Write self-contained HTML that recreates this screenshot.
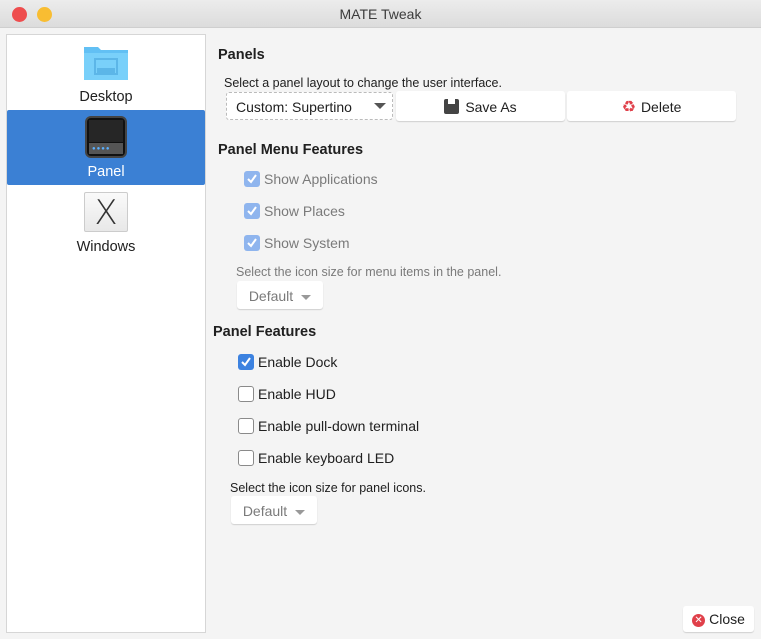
<!DOCTYPE html>
<html><head><style>
*{margin:0;padding:0;box-sizing:border-box}
body{width:761px;height:639px;background:#f4f4f4;font-family:"Liberation Sans","DejaVu Sans",sans-serif;font-size:14px;color:#202020;position:relative;overflow:hidden}
.a{position:absolute;white-space:nowrap}
.tb{left:0;top:0;width:761px;height:28px;background:linear-gradient(#ececec,#dcdcdc);border-bottom:1px solid #cfcfcf;text-align:center;line-height:28px;font-size:14px;color:#3c3c3c}
.dot{width:15px;height:15px;border-radius:50%;top:7px}
.side{left:6px;top:34px;width:200px;height:599px;background:#fff;border:1px solid #d6d6d6}
.h{font-weight:bold;font-size:14.5px}
.btn{background:#fff;border-radius:3px;box-shadow:0 1px 1px rgba(0,0,0,.15);height:30px;line-height:30px;text-align:center}
.cb{width:16px;height:16px;border-radius:3px}
.cb.on{background:#3c82e0}
.cb.dis{background:#8fb5ee}
.cb.off{border:1px solid #8a8a8a;background:#fff}
.cb svg{position:absolute;left:2px;top:2px}
.g{color:#7a7a7a}
.s{font-size:12.5px}
.tri{display:inline-block;border-left:5px solid transparent;border-right:5px solid transparent;border-top:5px solid #999;vertical-align:middle;margin-left:8px}
.m{top:1px}
</style></head><body>
<div class="a tb">MATE Tweak</div>
<div class="a dot" style="left:12px;background:#ee4d4e"></div>
<div class="a dot" style="left:37px;background:#f8bd32"></div>

<div class="a side"></div>
<div class="a" style="left:83px;top:44px;width:46px;height:36px">
<svg width="46" height="36"><path d="M1 3h14l3 3h27v29H1z" fill="#62c0f4"/><rect x="1" y="9" width="44" height="27" fill="#79d0fa"/><rect x="12" y="15" width="22" height="15" fill="none" stroke="#5cb6e8" stroke-width="2"/><rect x="14" y="24" width="18" height="5" fill="#5cb6e8"/></svg></div>
<div class="a" style="left:6px;top:89px;width:200px;text-align:center;font-size:14.5px">Desktop</div>
<div class="a" style="left:7px;top:110px;width:198px;height:75px;background:#3b80d4;border-radius:2px"></div>
<div class="a" style="left:85px;top:116px;width:42px;height:42px;background:#111;border-radius:6px;border:2px solid #444"></div>
<div class="a" style="left:89px;top:120px;width:34px;height:22px;background:#262626"></div>
<div class="a" style="left:89px;top:143px;width:34px;height:11px;background:#555"></div>
<div class="a" style="left:92px;top:146px;font-size:6px;color:#5ab0ff;letter-spacing:1px">●●●●</div>
<div class="a" style="left:6px;top:164px;width:200px;text-align:center;font-size:14.5px;color:#fff">Panel</div>
<div class="a" style="left:84px;top:192px;width:44px;height:40px;background:linear-gradient(#fafafa,#e8e8e8);border:1px solid #ccc;border-radius:2px;text-align:center;font-family:'DejaVu Sans',sans-serif;font-weight:300;font-size:34px;line-height:40px;color:#333">X</div>
<div class="a" style="left:6px;top:239px;width:200px;text-align:center;font-size:14.5px">Windows</div>

<div class="a h" style="left:218px;top:47px">Panels</div>
<div class="a s" style="left:224px;top:76px">Select a panel layout to change the user interface.</div>
<div class="a" style="left:226px;top:92px;width:167px;height:28px;background:#fff;border:1px dashed #bbb;border-radius:3px;line-height:28px;padding-left:9px">Custom: Supertino</div>
<div class="a" style="left:374px;top:103px;border-left:6px solid transparent;border-right:6px solid transparent;border-top:6px solid #555"></div>
<div class="a btn" style="left:396px;top:91px;width:169px;line-height:32px"><span style="display:inline-block;width:15px;height:15px;background:#444;border-radius:2px;vertical-align:-2px;margin-right:6px;position:relative"><span style="position:absolute;left:4px;top:0;width:7px;height:5px;background:#fff"></span></span>Save As</div>
<div class="a btn" style="left:567px;top:91px;width:169px;line-height:32px"><span style="color:#e0404a;font-size:16px;margin-right:5px">♻</span>Delete</div>

<div class="a h" style="left:218px;top:142px">Panel Menu Features</div>
<div class="a cb dis" style="left:244px;top:171px"><svg width="12" height="12"><path d="M2 6l3 3 5-7" stroke="#fff" stroke-width="2" fill="none"/></svg></div>
<div class="a g" style="left:264px;top:171px">Show Applications</div>
<div class="a cb dis" style="left:244px;top:203px"><svg width="12" height="12"><path d="M2 6l3 3 5-7" stroke="#fff" stroke-width="2" fill="none"/></svg></div>
<div class="a g" style="left:264px;top:203px">Show Places</div>
<div class="a cb dis" style="left:244px;top:235px"><svg width="12" height="12"><path d="M2 6l3 3 5-7" stroke="#fff" stroke-width="2" fill="none"/></svg></div>
<div class="a g" style="left:264px;top:235px">Show System</div>
<div class="a s g" style="left:236px;top:265px">Select the icon size for menu items in the panel.</div>
<div class="a btn g" style="left:237px;top:281px;width:86px;height:28px;line-height:30px">Default<span class="tri"></span></div>

<div class="a h" style="left:213px;top:324px">Panel Features</div>
<div class="a cb on" style="left:238px;top:354px"><svg width="12" height="12"><path d="M2 6l3 3 5-7" stroke="#fff" stroke-width="2" fill="none"/></svg></div>
<div class="a" style="left:258px;top:354px">Enable Dock</div>
<div class="a cb off" style="left:238px;top:386px"></div>
<div class="a" style="left:258px;top:386px">Enable HUD</div>
<div class="a cb off" style="left:238px;top:418px"></div>
<div class="a" style="left:258px;top:418px">Enable pull-down terminal</div>
<div class="a cb off" style="left:238px;top:450px"></div>
<div class="a" style="left:258px;top:450px">Enable keyboard LED</div>
<div class="a s" style="left:230px;top:481px">Select the icon size for panel icons.</div>
<div class="a btn g" style="left:231px;top:496px;width:86px;height:28px;line-height:30px">Default<span class="tri"></span></div>

<div class="a btn" style="left:683px;top:606px;width:71px;height:26px;line-height:27px"><span style="display:inline-block;width:13px;height:13px;border-radius:50%;background:#e0404a;color:#fff;font-size:10px;line-height:13px;vertical-align:1px;margin-right:4px">✕</span>Close</div>
</body></html>
